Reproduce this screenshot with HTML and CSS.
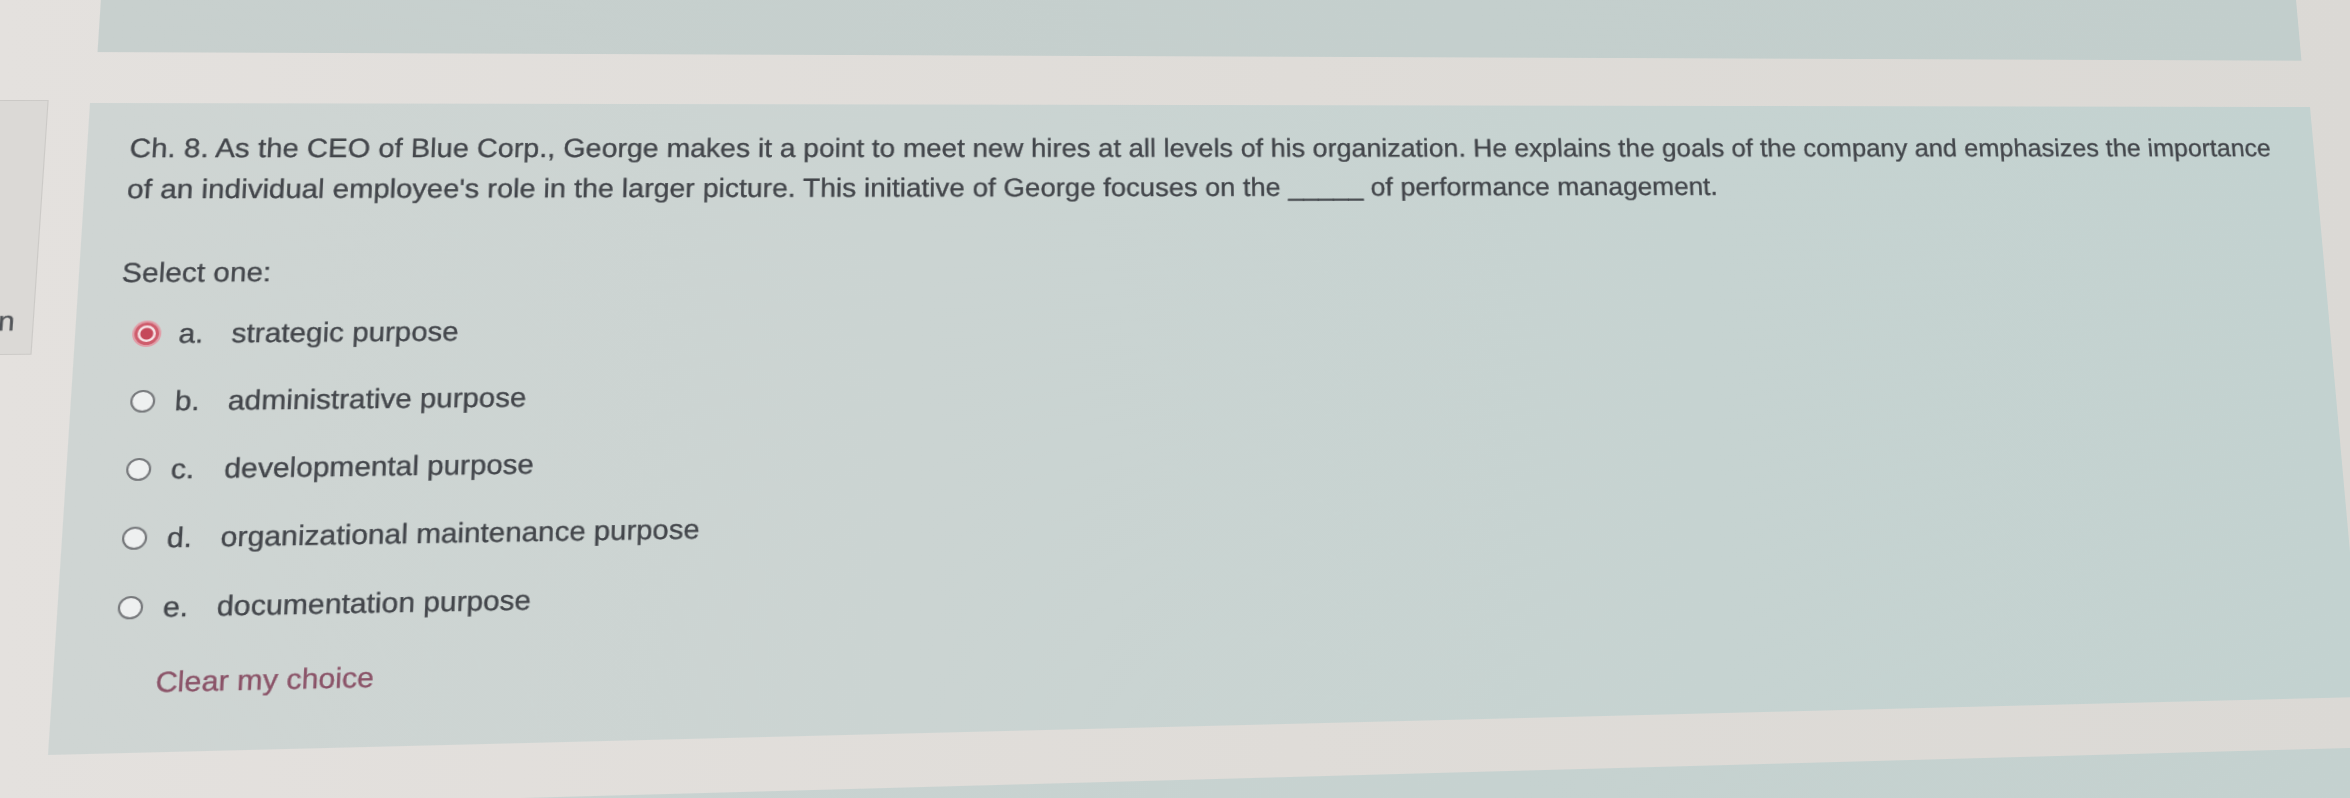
FILE: index.html
```html
<!DOCTYPE html>
<html lang="en">
<head>
<meta charset="utf-8">
<title>Question 8</title>
<link rel="stylesheet" href="styles.css">
</head>
<body>
<div class="page">
  <div class="grid">
    <div class="top-panel"></div>

    <aside class="info">
      <div class="info-line">Flag question</div>
    </aside>

    <section class="formulation">
      <div class="qtext">Ch. 8. As the CEO of Blue Corp., George makes it a point to meet new hires at all levels of his organization. He explains the goals of the company and emphasizes the importance of an individual employee's role in the larger picture. This initiative of George focuses on the <span class="blank">_____</span> of performance management.</div>
      <div class="prompt">Select one:</div>
      <div class="answers">
        <div class="answer"><span class="radio checked"></span><span class="num">a.</span><span class="label">strategic purpose</span></div>
        <div class="answer"><span class="radio"></span><span class="num">b.</span><span class="label">administrative purpose</span></div>
        <div class="answer"><span class="radio"></span><span class="num">c.</span><span class="label">developmental purpose</span></div>
        <div class="answer"><span class="radio"></span><span class="num">d.</span><span class="label">organizational maintenance purpose</span></div>
        <div class="answer"><span class="radio"></span><span class="num">e.</span><span class="label">documentation purpose</span></div>
      </div>
      <a class="clear">Clear my choice</a>
    </section>

    <div class="next-panel"></div>
  </div>
</div>
</body>
</html>
```

FILE: styles.css
```css
html, body {
  margin: 0;
  height: 100%;
  overflow: hidden;
}

body {
  background: linear-gradient(90deg, #e4e1de 0%, #dfdcd8 55%, #dbd9d5 100%);
  font-family: "Liberation Sans", Arial, Helvetica, sans-serif;
}

/* flat page, projected like the photographed screen */
.page {
  width: 2600px;
  height: 1100px;
  transform-origin: 0 0;
  transform: matrix3d(1.066896, 0.0064329, 0, 0.000043852,
                      -0.066886, 0.939672, 0, -0.0000657711,
                      0, 0, 1, 0,
                      -175.758, -62.180, 0, 1);
  text-rendering: geometricPrecision;
  color: #43464b;
  -webkit-text-stroke: 0.35px #43464b;
  font-size: 28px;
  line-height: 43px;
}

.grid {
  display: grid;
  grid-template-columns: 200px 2299px;
  grid-template-rows: 120px 659px 200px;
  column-gap: 39.5px;
  row-gap: 54px;
  padding-left: 20.5px;
}

.top-panel {
  grid-column: 2;
  grid-row: 1;
  margin: 0 5.5px 0 3.5px;
  background: linear-gradient(90deg, #c8d0ce 0%, #c4cfcd 60%, #c2cecc 100%);
}

.info {
  grid-column: 1;
  grid-row: 2;
  align-self: start;
  margin-top: -3px;
  height: 264px;
  box-sizing: border-box;
  border: 1.5px solid #cbc9c6;
  background: #dbd9d6;
  padding: 0 0 12px 14px;
  display: flex;
  flex-direction: column;
  justify-content: flex-end;
  white-space: nowrap;
  color: #505357;
  -webkit-text-stroke: 0.3px #505357;
}

.formulation {
  grid-column: 2;
  grid-row: 2;
  box-sizing: border-box;
  height: 659px;
  padding: 26px 32px 0 40px;
  background: linear-gradient(90deg, #cfd5d3 0%, #cbd4d2 35%, #c6d3d1 70%, #c3d2d0 100%);
}

.prompt {
  margin-top: 44px;
}

.answers {
  margin-top: 7px;
  padding-left: 14.8px;
}

.answer {
  display: flex;
  align-items: center;
  height: 69px;
}

.radio {
  flex: none;
  box-sizing: border-box;
  width: 23px;
  height: 23px;
  border-radius: 50%;
  border: 2.5px solid #77797c;
  background: #eef0f0;
  margin-right: 18.4px;
}

.radio.checked {
  border: 3px solid #cf5c6c;
  box-shadow: 0 0 0 2px #e29ca7;
  background: radial-gradient(circle, #c5485a 0 5.5px, #f6e3e6 6.5px);
}

.num {
  flex: none;
  width: 49.6px;
}

.label {
  white-space: nowrap;
}

.clear {
  display: block;
  margin: 18.2px 0 0 53.4px;
  color: #8a5267;
  -webkit-text-stroke: 0.35px #8a5267;
  text-decoration: none;
}

.next-panel {
  grid-column: 2;
  grid-row: 3;
  background: linear-gradient(90deg, #cbd3d1 0%, #c6d2d0 60%, #c4d1cf 100%);
}
```
